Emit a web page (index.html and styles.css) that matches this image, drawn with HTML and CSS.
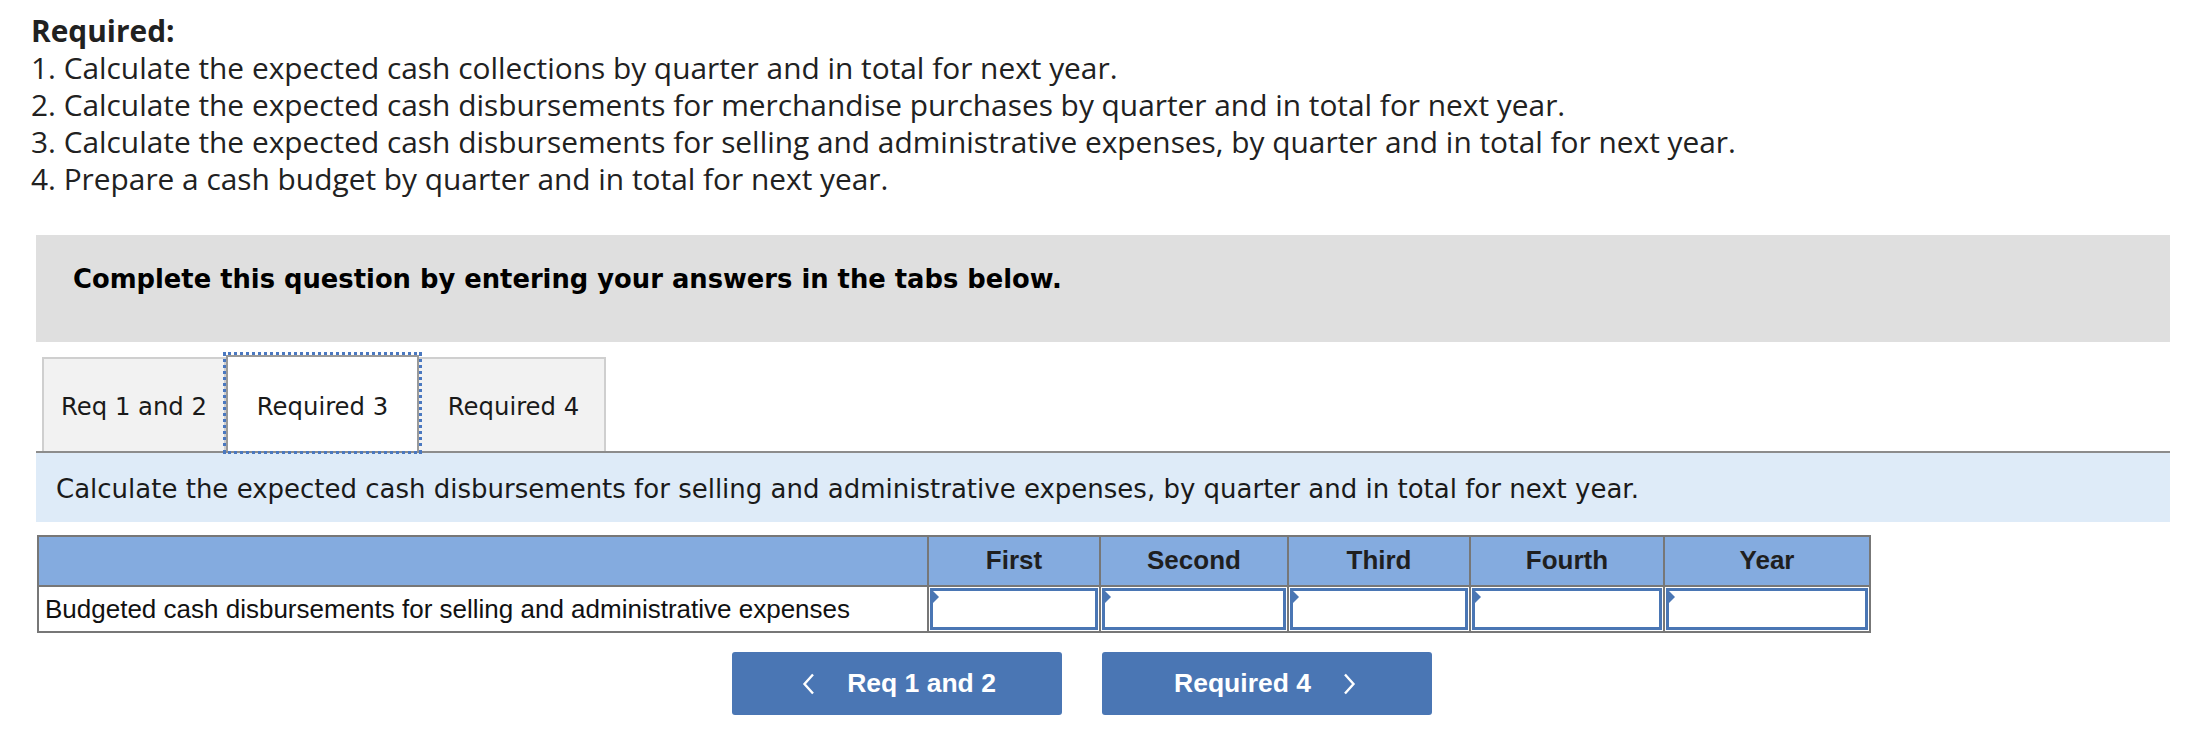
FILE: index.html
```html
<!DOCTYPE html>
<html lang="en">
<head>
<meta charset="utf-8">
<title>Required 3</title>
<link rel="stylesheet" href="styles.css">
</head>
<body>
<div class="page">
  <div class="question">
    <div class="req-title">Required:</div>
    <div class="req-line">1. Calculate the expected cash collections by quarter and in total for next year.</div>
    <div class="req-line">2. Calculate the expected cash disbursements for merchandise purchases by quarter and in total for next year.</div>
    <div class="req-line">3. Calculate the expected cash disbursements for selling and administrative expenses, by quarter and in total for next year.</div>
    <div class="req-line">4. Prepare a cash budget by quarter and in total for next year.</div>
  </div>

  <div class="panel">
    <div class="prompt">Complete this question by entering your answers in the tabs below.</div>

    <div class="tabs">
      <div class="tab">Req 1 and 2</div>
      <div class="tab active">Required 3</div>
      <div class="tab">Required 4</div>
    </div>

    <div class="instructions">Calculate the expected cash disbursements for selling and administrative expenses, by quarter and in total for next year.</div>

    <table class="grid">
      <colgroup>
        <col class="c-label">
        <col class="c-first">
        <col class="c-second">
        <col class="c-third">
        <col class="c-fourth">
        <col class="c-year">
      </colgroup>
      <thead>
        <tr>
          <th></th>
          <th>First</th>
          <th>Second</th>
          <th>Third</th>
          <th>Fourth</th>
          <th>Year</th>
        </tr>
      </thead>
      <tbody>
        <tr>
          <td class="label">Budgeted cash disbursements for selling and administrative expenses</td>
          <td class="cell"><div class="input"></div></td>
          <td class="cell"><div class="input"></div></td>
          <td class="cell"><div class="input"></div></td>
          <td class="cell"><div class="input"></div></td>
          <td class="cell"><div class="input"></div></td>
        </tr>
      </tbody>
    </table>

    <div class="nav">
      <div class="btn">
        <svg class="chev" viewBox="0 0 13 22" width="13" height="22"><path d="M11 1.5 L2.5 11 L11 20.5" fill="none" stroke="#fff" stroke-width="2.4"/></svg>
        <span>Req 1 and 2</span>
      </div>
      <div class="btn">
        <span>Required 4</span>
        <svg class="chev" viewBox="0 0 13 22" width="13" height="22"><path d="M2 1.5 L10.5 11 L2 20.5" fill="none" stroke="#fff" stroke-width="2.4"/></svg>
      </div>
    </div>
  </div>
</div>
</body>
</html>
```

FILE: styles.css
```css
html, body {
  margin: 0;
  padding: 0;
  background: #fff;
}

.page {
  width: 2210px;
  height: 754px;
  overflow: hidden;
}

.question {
  padding: 12px 0 0 31px;
  font-family: "Open Sans", "Liberation Sans", sans-serif;
  font-size: 29.85px;
  line-height: 37px;
  color: #212121;
}

.req-title {
  font-weight: 700;
}

.panel {
  margin: 38px 40px 0 36px;
}

.prompt {
  height: 107px;
  box-sizing: border-box;
  background: #dfdfdf;
  padding: 29px 0 0 37px;
  font-family: "DejaVu Sans", Verdana, sans-serif;
  font-weight: 700;
  font-size: 25.8px;
  line-height: 30px;
  color: #000;
}

.tabs {
  display: flex;
  margin-top: 15px;
  padding-left: 6px;
  border-bottom: 2px solid #8c8c8c;
  height: 94px;
}

.tab {
  display: flex;
  align-items: center;
  justify-content: center;
  box-sizing: border-box;
  height: 94px;
  padding-top: 3px;
  background: #f2f2f2;
  border: 2px solid #cfcfcf;
  border-bottom: none;
  font-family: "DejaVu Sans", Verdana, sans-serif;
  font-size: 24.3px;
  color: #1a1a1a;
}

.tab:nth-child(1) { width: 184px; }
.tab:nth-child(2) { width: 193px; }
.tab:nth-child(3) { width: 187px; border-left: none; padding-left: 4px; }

.tab.active {
  background: #fff;
  border: 2px solid #9a9a9a;
  border-bottom: none;
  outline: 3px dotted #4a78c0;
  outline-offset: 0;
  position: relative;
  z-index: 1;
  height: 96px;
  margin-top: -2px;
  padding-top: 5px;
}

.instructions {
  height: 69px;
  box-sizing: border-box;
  background: #deebf8;
  padding: 21px 0 0 20px;
  font-family: "DejaVu Sans", Verdana, sans-serif;
  font-size: 26px;
  line-height: 30px;
  color: #1a1a1a;
}

.grid {
  margin-top: 13px;
  margin-left: 1px;
  border-collapse: collapse;
  width: 1832px;
  table-layout: fixed;
  font-family: "Liberation Sans", Arial, sans-serif;
}

.c-label { width: 890px; }
.c-first { width: 172px; }
.c-second { width: 188px; }
.c-third { width: 182px; }
.c-fourth { width: 194px; }
.c-year { width: 206px; }

.grid th {
  background: #84abdf;
  border: 2px solid #777;
  height: 46px;
  padding: 0 0 2px;
  font-size: 26px;
  font-weight: 700;
  color: #1f1f1f;
  text-align: center;
}

.grid td {
  border: 2px solid #777;
  height: 44px;
  padding: 0;
}

.grid td.label {
  padding-left: 6px;
  font-size: 26px;
  color: #111;
  white-space: nowrap;
}

.grid td.cell {
  padding: 0;
}

.input {
  position: relative;
  height: 42px;
  box-sizing: border-box;
  margin: 1px;
  border: 3px solid #4a76b4;
  background: #fff;
}

.input::before {
  content: "";
  position: absolute;
  left: -2px;
  top: -2px;
  border-top: 8px solid transparent;
  border-bottom: 8px solid transparent;
  border-left: 8px solid #4a76b4;
}

.nav {
  display: flex;
  gap: 40px;
  margin: 19px 0 0 696px;
}

.btn {
  display: flex;
  align-items: center;
  justify-content: center;
  gap: 32px;
  width: 330px;
  height: 63px;
  background: #4a76b4;
  border-radius: 3px;
  font-family: "Liberation Sans", Arial, sans-serif;
  font-weight: 700;
  font-size: 26.5px;
  color: #fff;
}

.btn:first-child { padding-left: 4px; box-sizing: border-box; }
.btn:last-child { padding-right: 4px; box-sizing: border-box; }

.chev {
  display: block;
}
```
